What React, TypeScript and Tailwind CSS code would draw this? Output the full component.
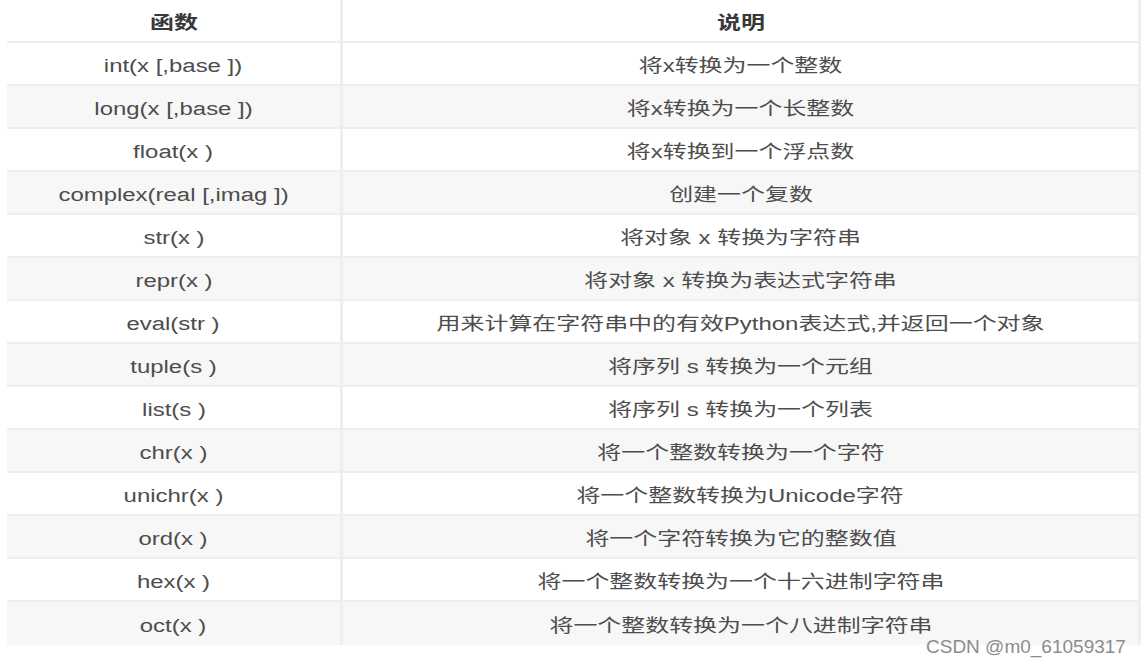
import React from "react";

const rows: [string, string][] = [
  ["int(x [,base ])", "将x转换为一个整数"],
  ["long(x [,base ])", "将x转换为一个长整数"],
  ["float(x )", "将x转换到一个浮点数"],
  ["complex(real [,imag ])", "创建一个复数"],
  ["str(x )", "将对象 x 转换为字符串"],
  ["repr(x )", "将对象 x 转换为表达式字符串"],
  ["eval(str )", "用来计算在字符串中的有效Python表达式,并返回一个对象"],
  ["tuple(s )", "将序列 s 转换为一个元组"],
  ["list(s )", "将序列 s 转换为一个列表"],
  ["chr(x )", "将一个整数转换为一个字符"],
  ["unichr(x )", "将一个整数转换为Unicode字符"],
  ["ord(x )", "将一个字符转换为它的整数值"],
  ["hex(x )", "将一个整数转换为一个十六进制字符串"],
  ["oct(x )", "将一个整数转换为一个八进制字符串"],
];

const font = {
  fontFamily: '"Liberation Sans", "Noto Sans CJK SC", sans-serif',
};

function Cell({ children, left, bold }: { children: React.ReactNode; left?: boolean; bold?: boolean }) {
  return (
    <div
      className={
        left
          ? "flex items-center justify-center border-r-[3px] border-[#eeeeee] pt-[6px]"
          : "flex items-center justify-center pt-[6px]"
      }
    >
      <span
        className={
          bold
            ? "inline-block scale-x-[1.33] whitespace-nowrap text-[18px] font-bold text-[#383838]"
            : "inline-block scale-x-[1.33] whitespace-nowrap text-[18px] text-[#4d4d4d]"
        }
      >
        {children}
      </span>
    </div>
  );
}

export default function App() {
  return (
    <div className="relative h-[665px] w-[1145px] overflow-hidden bg-white" style={font}>
      <div className="ml-[7px] w-[1134px] border-r-[3px] border-[#eeeeee]">
        <div className="grid h-[43px] grid-cols-[336px_1fr] border-b-2 border-[#eeeeee] bg-white">
          <Cell left bold>函数</Cell>
          <Cell bold>说明</Cell>
        </div>
        {rows.map(([a, b], i) => (
          <div
            key={a}
            className={
              i % 2 === 0
                ? "grid h-[43px] grid-cols-[336px_1fr] border-b-2 border-[#eeeeee] bg-white"
                : i === rows.length - 1
                ? "grid h-[43px] grid-cols-[336px_1fr] bg-[#f7f7f7]"
                : "grid h-[43px] grid-cols-[336px_1fr] border-b-2 border-[#eeeeee] bg-[#f7f7f7]"
            }
          >
            <Cell left>{a}</Cell>
            <Cell>{b}</Cell>
          </div>
        ))}
      </div>
      <div className="absolute left-[926px] top-[635px] text-[19px] leading-[24px] text-[#8c8c8c]">
        CSDN @m0_61059317
      </div>
    </div>
  );
}
